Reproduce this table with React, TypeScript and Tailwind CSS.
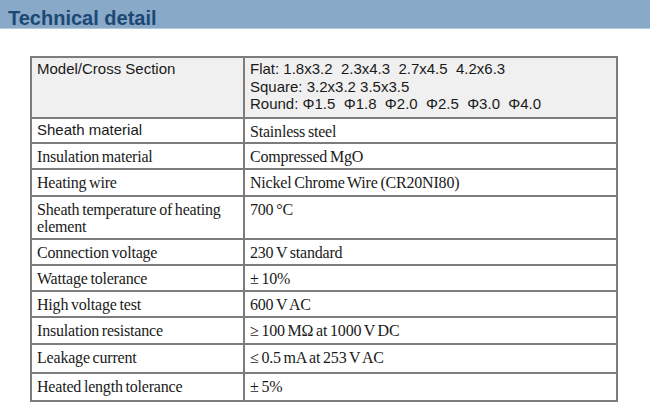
const rows: { label: string; value: string; h: string; sans?: boolean }[] = [
  { label: 'Sheath material', value: 'Stainless steel', h: 'h-[25px]', sans: true },
  { label: 'Insulation material', value: 'Compressed MgO', h: 'h-[26px]' },
  { label: 'Heating wire', value: 'Nickel Chrome Wire (CR20NI80)', h: 'h-[27px]' },
  { label: 'Sheath temperature of heating element', value: '700 °C', h: 'h-[43px]' },
  { label: 'Connection voltage', value: '230 V standard', h: 'h-[26px]' },
  { label: 'Wattage tolerance', value: '± 10%', h: 'h-[26px]' },
  { label: 'High voltage test', value: '600 V AC', h: 'h-[26px]' },
  { label: 'Insulation resistance', value: '≥ 100 MΩ at 1000 V DC', h: 'h-[27px]' },
  { label: 'Leakage current', value: '≤ 0.5 mA at 253 V AC', h: 'h-[29px]' },
  { label: 'Heated length tolerance', value: '± 5%', h: 'h-[28px]' }
]

const sans = "font-['Liberation_Sans',Arial,sans-serif] text-[15px] leading-[17.5px] pt-[2px]"
const serif =
  "font-['Liberation_Serif','Times_New_Roman',serif] text-[16px] leading-[17px] tracking-[-0.2px] [word-spacing:-1px] pt-[4px]"
const cell = 'border-2 border-[#7c7c7c] px-[5px] align-top text-[#1a1a1a]'

export default function App() {
  return (
    <div className="h-[411px] w-[650px] overflow-hidden bg-white">
      <div className="h-[29px] border-b border-[#b5c8dc] bg-[#89a9c9] pl-[8px] pt-[7px]">
        <h1 className="font-['Liberation_Sans',Arial,sans-serif] text-[20px] leading-[22px] font-bold text-[#1c4874]">
          Technical detail
        </h1>
      </div>
      <div className="pl-[30px] pt-[27px]">
        <table className="w-[588px] table-fixed border-collapse">
          <colgroup>
            <col className="w-[213px]" />
            <col />
          </colgroup>
          <tbody>
            <tr className="h-[61px] bg-[#f0f0f0]">
              <td className={`${cell} ${sans}`}>Model/Cross Section</td>
              <td className={`${cell} ${sans} whitespace-pre`}>
                {'Flat: 1.8x3.2  2.3x4.3  2.7x4.5  4.2x6.3\nSquare: 3.2x3.2 3.5x3.5\nRound: Φ1.5  Φ1.8  Φ2.0  Φ2.5  Φ3.0  Φ4.0'}
              </td>
            </tr>
            {rows.map((r) => (
              <tr key={r.label} className={r.h}>
                <td className={`${cell} ${r.sans ? sans : serif}`}>{r.label}</td>
                <td className={`${cell} ${serif}`}>{r.value}</td>
              </tr>
            ))}
          </tbody>
        </table>
      </div>
    </div>
  )
}
